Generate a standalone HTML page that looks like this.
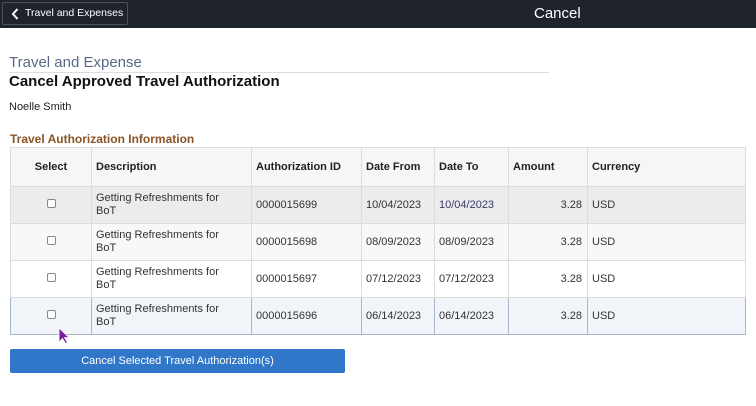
<!DOCTYPE html>
<html><head><meta charset="utf-8"><style>
*{margin:0;padding:0;box-sizing:border-box}
body{width:756px;height:406px;overflow:hidden;background:#fff;font-family:"Liberation Sans",Arial,sans-serif;position:relative;color:#222}
.top{position:absolute;left:0;top:0;width:756px;height:28px;background:#1e232c}
.back{position:absolute;left:2px;top:2px;width:126px;height:23px;border:1px solid #4a5260;border-radius:2px;color:#fff;font-size:10.5px;line-height:21px;padding-left:22px;white-space:nowrap}
.back svg{position:absolute;left:8px;top:5px}
.ttl{position:absolute;left:534px;top:5px;color:#fff;font-size:15px}
.a{position:absolute;white-space:nowrap}
table{position:absolute;left:10px;top:147px;border-collapse:collapse;font-size:11px}
td,th{border:1px solid #dcdcdc;padding:0 0 0 4px;text-align:left;vertical-align:middle}
th{height:39px;font-weight:bold;background:#f6f6f6;color:#222}
td{height:37px;color:#333;line-height:13px}
.cb{display:inline-block;width:9px;height:9px;border:1px solid #888;border-radius:2px;background:#fff}
tr.r1 td{background:#ececec}
tr.r2 td{background:#f8f8f8}
tr.r4 td{background:#f1f5fa;border-color:#a9b6c8}
.btn{position:absolute;left:10px;top:349px;width:335px;height:24px;background:#3077c9;border-radius:2px;color:#fff;font-size:11px;text-align:center;line-height:24px}
</style></head><body>
<div class="top">
<div class="back"><svg width="8" height="12" viewBox="0 0 8 12"><path d="M6.5 1L2 6l4.5 5" stroke="#fff" stroke-width="2" fill="none"/></svg>Travel and Expenses</div>
<div class="ttl">Cancel</div>
</div>
<div class="a" style="left:9px;top:54px;font-size:15px;color:#5a6a85">Travel and Expense</div>
<div class="a" style="left:9px;top:72px;width:540px;border-top:1px solid #ddd"></div>
<div class="a" style="left:9px;top:73px;font-size:15px;font-weight:bold;color:#111">Cancel Approved Travel Authorization</div>
<div class="a" style="left:9px;top:101px;font-size:11px;color:#222">Noelle Smith</div>
<div class="a" style="left:10px;top:132px;font-size:12px;font-weight:bold;color:#8a5424">Travel Authorization Information</div>
<table>
<tr><th style="width:81px;text-align:center;padding:0">Select</th><th style="width:160px">Description</th><th style="width:110px">Authorization ID</th><th style="width:73px">Date From</th><th style="width:74px">Date To</th><th style="width:79px">Amount</th><th style="width:158px">Currency</th></tr>
<tr class="r1"><td style="text-align:center;padding:0"><span class="cb"></span></td><td>Getting Refreshments for<br>BoT</td><td>0000015699</td><td>10/04/2023</td><td style="color:#3a3a6a">10/04/2023</td><td style="text-align:right;padding-right:5px">3.28</td><td>USD</td></tr>
<tr class="r2"><td style="text-align:center;padding:0"><span class="cb"></span></td><td>Getting Refreshments for<br>BoT</td><td>0000015698</td><td>08/09/2023</td><td>08/09/2023</td><td style="text-align:right;padding-right:5px">3.28</td><td>USD</td></tr>
<tr><td style="text-align:center;padding:0"><span class="cb"></span></td><td>Getting Refreshments for<br>BoT</td><td>0000015697</td><td>07/12/2023</td><td>07/12/2023</td><td style="text-align:right;padding-right:5px">3.28</td><td>USD</td></tr>
<tr class="r4"><td style="text-align:center;padding:0"><span class="cb"></span></td><td>Getting Refreshments for<br>BoT</td><td>0000015696</td><td>06/14/2023</td><td>06/14/2023</td><td style="text-align:right;padding-right:5px">3.28</td><td>USD</td></tr>
</table>
<svg class="a" style="left:58px;top:327px" width="12" height="18" viewBox="0 0 12 18"><path d="M1 1v14l3.5-3.5 3 5 2-1-3-5H11z" fill="#7a1fa0" stroke="#fff" stroke-width="0.8"/></svg>
<div class="btn">Cancel Selected Travel Authorization(s)</div>
</body></html>
